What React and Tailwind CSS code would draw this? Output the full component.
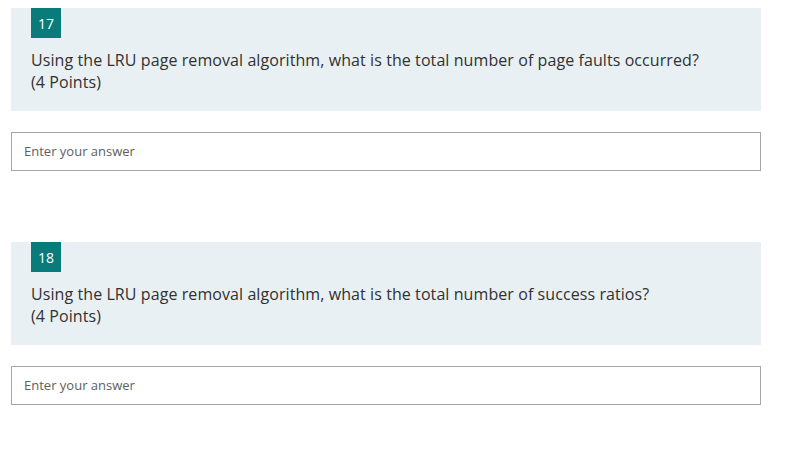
const questions = [
    {
        num: 17,
        text: "Using the LRU page removal algorithm, what is the total number of page faults occurred?",
        points: 4,
    },
    {
        num: 18,
        text: "Using the LRU page removal algorithm, what is the total number of success ratios?",
        points: 4,
    },
];

const Question = ({ q }) => {
    return (
        <div className="flex flex-col">
            <div className="bg-[#e9f0f3] px-5 pb-[18px]">
                <div className="flex h-[30px] w-[30px] items-center justify-center bg-[#0a7b7b] text-[14px] text-white">
                    {q.num}
                </div>
                <div className="mt-[11px] text-[16px] leading-[22px] tracking-[0.08px] text-[#323130]">
                    <div>{q.text}</div>
                    <div>({q.points} Points)</div>
                </div>
            </div>
            <div className="mt-[21px] flex h-[39px] items-center border border-[#a6a6a6] bg-white px-3">
                <span className="text-[13px] text-[#605e5c]">Enter your answer</span>
            </div>
        </div>
    );
};

export default function App() {
    return (
        <div
            className="min-h-[458px] w-[793px] bg-white pl-[11px] pr-[32px] pt-[8px]"
            style={{ fontFamily: '"Open Sans", "Noto Sans", sans-serif' }}
        >
            <div className="flex flex-col gap-[71px]">
                {questions.map((q) => (
                    <Question key={q.num} q={q} />
                ))}
            </div>
        </div>
    );
}
